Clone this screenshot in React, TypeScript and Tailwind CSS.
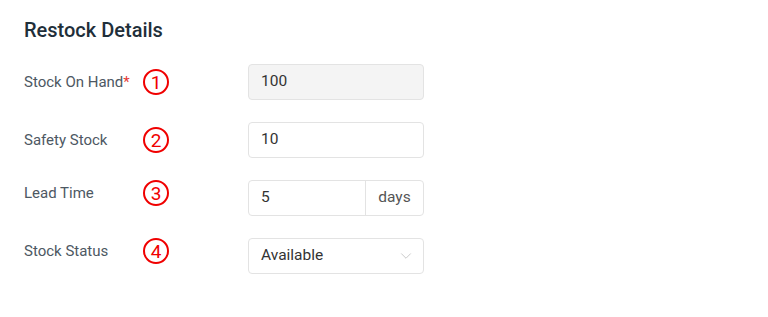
import { ChevronDown } from 'lucide-react'

function Marker({ n }: { n: number }) {
  return (
    <div className="flex h-[26px] w-[26px] items-center justify-center rounded-full border-2 border-[#f00000] text-[19px] leading-none text-[#f00000]">
      {n}
    </div>
  )
}

function Row({ label, n, required, lift, children }: { label: string; n: number; required?: boolean; lift?: boolean; children: React.ReactNode }) {
  return (
    <div className="flex h-9 items-center">
      <div className={`flex w-[224px] items-center ${lift ? '-mt-2.5' : ''}`}>
        <div className="w-[119px] text-[15px] text-[#4d5863]">
          {label}
          {required && <span className="text-[#e53935]">*</span>}
        </div>
        <Marker n={n} />
      </div>
      {children}
    </div>
  )
}

export default function App() {
  return (
    <div className="min-h-screen bg-white px-6 pt-[14px] font-['Roboto',sans-serif]">
      <h2 className="text-[20px] leading-8 font-medium text-[#1f2f3a]">Restock Details</h2>

      <div className="mt-[18px] flex flex-col gap-[22px]">
        <Row label="Stock On Hand" n={1} required>
          <div className="flex h-9 w-[176px] items-center rounded border border-[#e3e3e3] bg-[#f4f4f4] px-3 text-[15.5px] text-[#333]">
            100
          </div>
        </Row>

        <Row label="Safety Stock" n={2}>
          <div className="flex h-9 w-[176px] items-center rounded border border-[#e3e3e3] bg-white px-3 text-[15.5px] text-[#333]">
            10
          </div>
        </Row>

        <Row label="Lead Time" n={3} lift>
          <div className="flex h-9 w-[176px] rounded border border-[#e3e3e3] bg-white text-[15.5px]">
            <div className="flex flex-1 items-center px-3 text-[#333]">5</div>
            <div className="flex w-[58px] items-center justify-center border-l border-[#e3e3e3] text-[#555]">days</div>
          </div>
        </Row>

        <Row label="Stock Status" n={4} lift>
          <div className="flex h-9 w-[176px] items-center justify-between rounded border border-[#e3e3e3] bg-white pr-2 pl-3 text-[15.5px] text-[#333]">
            <span>Available</span>
            <ChevronDown size={18} strokeWidth={1} className="text-[#b8b8b8]" />
          </div>
        </Row>
      </div>
    </div>
  )
}
